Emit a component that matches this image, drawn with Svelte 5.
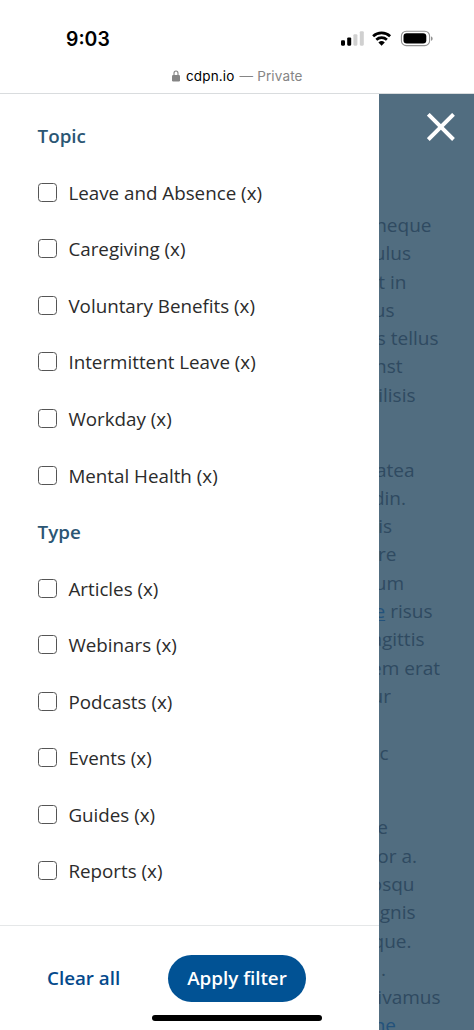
<script>
  const groups = [
    {
      title: 'Topic',
      items: ['Leave and Absence', 'Caregiving', 'Voluntary Benefits', 'Intermittent Leave', 'Workday', 'Mental Health'],
    },
    {
      title: 'Type',
      items: ['Articles', 'Webinars', 'Podcasts', 'Events', 'Guides', 'Reports'],
    },
  ];

  // Each line of the covered article: visible text and the width it reaches past the drawer.
  const paragraphs = [
    [['neque', 52.5], ['ulus', 32], ['t in', 27.5], ['us', 15.5], ['s tellus', 59.5], ['nst', 23.5], ['ilisis', 36.5]],
    [['atea', 35.5], ['din.', 27], ['is', 13], ['re', 17.5], ['um', 25], ['risus', 53.5, 'e'], ['agittis', 45.5], ['em erat', 61], ['ur', 12], ['', 0], ['c', 9.5]],
    [['e', 9], ['or a.', 38], ['osqu', 35.5], ['gnis', 36.5], ['que.', 32.5], ['.', 7], ['ivamus', 61.5], ['', 17, 'ne']],
  ];
</script>

<div class="screen">
  <header>
    <div class="status">
      <span class="time">9:03</span>
      <svg class="signals" width="94" height="18" viewBox="0 0 94 18">
        <rect x="1" y="10.3" width="4" height="5.4" rx="1.1" />
        <rect x="7.2" y="7.5" width="4" height="8.2" rx="1.1" />
        <rect x="13.4" y="4.2" width="4" height="11.5" rx="1.1" fill="#d0d0d0" />
        <rect x="19.8" y="1.2" width="4" height="14.5" rx="1.1" fill="#d0d0d0" />
        <g fill="none" stroke="#000" stroke-width="2.7">
          <path d="M33.1 6.2a12.4 12.4 0 0 1 17 0" />
          <path d="M36.3 9.8a7.8 7.8 0 0 1 10.6 0" />
        </g>
        <path d="M41.6 15.7l-3.2-3.3a4.8 4.8 0 0 1 6.4 0z" />
        <rect x="61.4" y="1.2" width="28.2" height="14.4" rx="4.8" fill="none" stroke="#929292" stroke-width="1.1" />
        <rect x="63.5" y="3.3" width="22.8" height="10.2" rx="3.2" />
        <path d="M91 6.4c2.2.7 2.2 3.6 0 4.3z" fill="#929292" />
      </svg>
    </div>
    <div class="address">
      <svg width="8" height="12" viewBox="0 0 8 12">
        <path d="M2 6V3.2a2 2.2 0 0 1 4 0V6" fill="none" stroke="#858585" stroke-width="1.1" />
        <rect y="5" width="8" height="6.4" rx="1.2" fill="#858585" />
      </svg>
      <span class="host">cdpn.io</span>
      <span class="mode">— Private</span>
    </div>
  </header>

  <main>
    <aside>
      <form>
        {#each groups as group}
          <h2>{group.title}</h2>
          {#each group.items as item}
            <label><input type="checkbox" /><span>{item} (x)</span></label>
          {/each}
        {/each}
      </form>
      <footer>
        <button class="clear">Clear all</button>
        <button class="apply">Apply filter</button>
      </footer>
    </aside>
    <section>
      {#each paragraphs as lines}
        <div class="para">
          {#each lines as [text, reach, link]}
            <div class="line" style:width="{reach}px"><span>{#if link}<a href="#top">{link}</a>{' '}{/if}{text}</span></div>
          {/each}
        </div>
      {/each}
    </section>
  </main>

  <button class="close" aria-label="Close">
    <svg width="28" height="28" viewBox="0 0 28 28"><path d="M1.3 1.3l25.2 25.2M26.5 1.3L1.3 26.5" stroke="#fff" stroke-width="3.9" /></svg>
  </button>
  <div class="home"></div>
</div>

<style>
  :global(body) { margin: 0; background: #fff; }
  .screen {
    position: relative;
    width: 474px;
    height: 1030px;
    overflow: hidden;
    display: flex;
    flex-direction: column;
    font-family: "Open Sans", sans-serif;
    font-size: 19px;
    color: #2b2b2b;
  }
  header {
    box-sizing: border-box;
    height: 94px;
    border-bottom: 1px solid #d9dcde;
    font-family: Inter, sans-serif;
    flex: none;
  }
  .status {
    display: flex;
    justify-content: space-between;
    padding: 26px 40.5px 0 66px;
    height: 24px;
  }
  .time { font-size: 19.4px; line-height: 27px; font-weight: 600; color: #000; }
  .signals { margin-top: 4px; }
  .address {
    display: flex;
    align-items: center;
    margin: 16px 0 0 172px;
    height: 20px;
    font-size: 13.5px;
    white-space: nowrap;
  }
  .host { color: #000; margin-left: 6px; letter-spacing: 0.15px; }
  .mode { color: #858585; margin-left: 5px; letter-spacing: 0.15px; }
  main { display: flex; flex: 1; min-height: 0; }
  aside { width: 379px; display: flex; flex-direction: column; background: #fff; }
  form { flex: 1; padding: 13.5px 0 0 37.6px; }
  h2, label { display: flex; align-items: center; height: 56.55px; margin: 0; }
  label { font-size: 18.8px; }
  label span { padding-top: 1px; }
  h2 { font-size: 18.8px; font-weight: 600; color: #2b5674; }
  input {
    appearance: none;
    box-sizing: border-box;
    width: 19px;
    height: 19px;
    margin: 0 11.8px 0 0;
    border: 1.4px solid #555;
    border-radius: 3.5px;
  }
  footer {
    box-sizing: border-box;
    height: 105px;
    border-top: 1px solid #e5e7e8;
    display: flex;
    align-items: flex-start;
    padding: 28.5px 0 0 47px;
  }
  button { border: 0; padding: 0; background: none; font: 600 18.8px "Open Sans", sans-serif; white-space: nowrap; }
  .clear { width: 73px; height: 47px; color: #04498c; text-align: left; }
  .apply { width: 138px; height: 47px; margin-left: 48px; border-radius: 24px; background: #015294; color: #fff; }
  section { flex: 1; background: #516d80; padding-top: 117px; color: #2f4a61; overflow: hidden; }
  .para { margin-bottom: 46.5px; }
  .line {
    display: flex;
    justify-content: flex-end;
    overflow: hidden;
    height: 28.3px;
    line-height: 28.3px;
    white-space: nowrap;
  }
  a { color: #23527b; text-underline-offset: 2px; }
  .close { position: absolute; left: 427px; top: 112.5px; width: 28px; height: 28px; }
  .close svg { display: block; }
  .home { position: absolute; left: 152px; top: 1014.5px; width: 170px; height: 6px; border-radius: 3px; background: #000; }
</style>
